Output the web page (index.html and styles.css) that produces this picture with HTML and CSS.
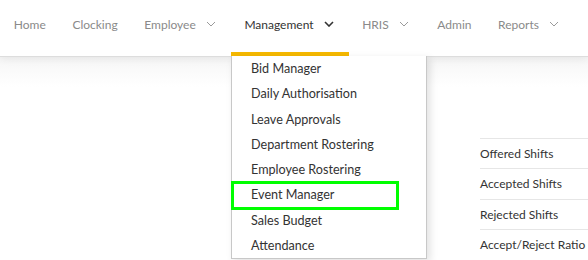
FILE: index.html
```html
<!DOCTYPE html>
<html>
<head>
<meta charset="utf-8">
<link rel="stylesheet" href="styles.css">
</head>
<body>
<nav class="nav">
  <div class="nav-item">Home</div>
  <div class="nav-item">Clocking</div>
  <div class="nav-item">Employee <svg class="chev" viewBox="0 0 12 6"><path d="M1 1l4 4 4-4"/></svg></div>
  <div class="nav-item active">Management <svg class="chev" viewBox="0 0 12 6"><path d="M1 1l4 4 4-4"/></svg>
    <ul class="dropdown">
      <li>Bid Manager</li>
      <li>Daily Authorisation</li>
      <li>Leave Approvals</li>
      <li>Department Rostering</li>
      <li>Employee Rostering</li>
      <li class="highlight">Event Manager<span class="mark"></span></li>
      <li>Sales Budget</li>
      <li>Attendance</li>
    </ul>
  </div>
  <div class="nav-item">HRIS <svg class="chev" viewBox="0 0 12 6"><path d="M1 1l4 4 4-4"/></svg></div>
  <div class="nav-item">Admin</div>
  <div class="nav-item">Reports <svg class="chev" viewBox="0 0 12 6"><path d="M1 1l4 4 4-4"/></svg></div>
</nav>
<main class="main">
  <div class="table">
    <div class="row">Offered Shifts</div>
    <div class="row">Accepted Shifts</div>
    <div class="row">Rejected Shifts</div>
    <div class="row">Accept/Reject Ratio</div>
  </div>
</main>
</body>
</html>
```

FILE: styles.css
```css
* { box-sizing: border-box; }
html, body { margin: 0; padding: 0; background: #fff; }
body {
  font-family: Lato, "Open Sans", sans-serif;
  font-size: 12px;
  color: #333;
  width: 588px;
  height: 260px;
  overflow: hidden;
  position: relative;
}
.nav {
  display: flex;
  height: 57px;
  padding-left: 0.5px;
  border-bottom: 1px solid #ddd;
  box-shadow: 0 2px 8px rgba(0,0,0,0.07);
  background: #fff;
  position: relative;
  z-index: 2;
}
.nav-item {
  position: relative;
  display: flex;
  align-items: center;
  gap: 10px;
  padding: 0 13.3px 8px;
  color: #8a8a8a;
  font-size: 12px;
  height: 56px;
}
.chev {
  width: 12px;
  height: 6px;
  fill: none;
  stroke: #9a9a9a;
  stroke-width: 1;
}
.nav-item.active { color: #333; }
.nav-item.active .chev { stroke: #333; stroke-width: 1.6; }
.nav-item.active::after {
  content: "";
  position: absolute;
  left: 0;
  right: 0;
  bottom: 0;
  height: 4px;
  background: #f5b800;
}
.dropdown {
  position: absolute;
  top: 56px;
  left: 0;
  width: 196px;
  margin: 0;
  padding: 0;
  list-style: none;
  background: #fff;
  border: 1px solid #c8c8c8;
  border-top: none;
  box-shadow: 3px 3px 8px rgba(0,0,0,0.12);
  z-index: 3;
}
.dropdown li {
  position: relative;
  height: 25.3px;
  line-height: 25.3px;
  padding-left: 19px;
  font-size: 12.6px;
  color: #333;
  white-space: nowrap;
}
.mark {
  position: absolute;
  left: -1px;
  top: -1px;
  width: 168px;
  height: 29px;
  border: 3px solid #00ff00;
}
.main {
  display: flex;
  justify-content: flex-end;
  padding-top: 81px;
  background: linear-gradient(#f6f6f6, #fff 30px);
}
.table {
  width: 108px;
}
.row {
  height: 30.3px;
  line-height: 30px;
  border-top: 1px solid #e6e6e6;
  color: #333;
  white-space: nowrap;
}
```
